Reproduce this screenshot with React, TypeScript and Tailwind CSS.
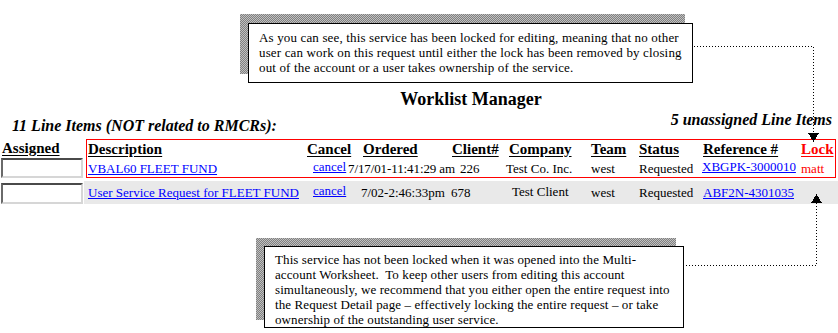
export default function App() {
  return (
    <div className="relative w-[838px] h-[333px] overflow-hidden bg-white text-black font-['Liberation_Serif','Times_New_Roman',serif]">
      <div className="pt-[89px]">
        <h1 className="pl-[104px] text-center text-[18px] leading-[21px] font-bold">Worklist Manager</h1>

        <div className="flex justify-between h-[29px] pl-[12px] pr-[6px]">
          <p className="mt-[7px] text-[16px] leading-[18px] font-bold italic">11 Line Items (NOT related to RMCRs):</p>
          <p className="mt-[1px] text-[16px] leading-[18px] font-bold italic">5 unassigned Line Items</p>
        </div>

        {/* header + first row, red box around the right part */}
        <div className="flex">
          <div className="w-[86px] shrink-0">
            <div className="h-[19px] pl-[2px] text-[15px] leading-[19px] font-bold underline underline-offset-2">Assigned</div>
            <input className="block ml-px w-[82px] h-[20px] border-2 border-t-[#4a4a4a] border-l-[#6a6a6a] border-r-[#d6d6d6] border-b-[#d6d6d6] bg-white" />
          </div>
          <div className="w-[750px] shrink-0 border border-[#ff0000]">
            <div className="flex h-[19px] text-[15px] leading-[19px] font-bold whitespace-nowrap [&>div]:underline [&>div]:underline-offset-2">
              <div className="w-[218px] pl-px">Description</div>
              <div className="w-[42px] pl-[2px]">Cancel</div>
              <div className="w-[101px] pl-[16px]">Ordered</div>
              <div className="w-[56px] pl-[4px]">Client#</div>
              <div className="w-[85px] pl-[5px]">Company</div>
              <div className="w-[48px] pl-[2px]">Team</div>
              <div className="w-[63px] pl-[2px]">Status</div>
              <div className="w-[99px] pl-[3px]">Reference #</div>
              <div className="w-[36px] pl-[2px] text-[#ff0000]">Lock</div>
            </div>
            <div className="flex h-[18px] text-[13px] leading-[19px] whitespace-nowrap">
              <div className="w-[218px] pl-px"><a href="#" className="text-[#0000ff] underline">VBAL60 FLEET FUND</a></div>
              <div className="w-[42px] pl-[8px] leading-[15px]"><a href="#" className="text-[#0000ff] underline">cancel</a></div>
              <div className="w-[101px] pl-[1px] tracking-[-0.1px]">7/17/01-11:41:29 am</div>
              <div className="w-[56px] pl-[12px]">226</div>
              <div className="w-[85px] pl-[2px]">Test Co. Inc.</div>
              <div className="w-[48px] pl-[2px]">west</div>
              <div className="w-[63px] pl-[2px]">Requested</div>
              <div className="w-[99px] pl-[2px] leading-[16px]"><a href="#" className="text-[#0000ff] underline">XBGPK-3000010</a></div>
              <div className="w-[36px] pl-[2px] text-[#ff0000]">matt</div>
            </div>
          </div>
        </div>

        {/* second row */}
        <div className="flex mt-[3px] h-[23px]">
          <div className="w-[84px] shrink-0 pt-[2px]">
            <input className="block ml-px w-[82px] h-[21px] border-2 border-t-[#4a4a4a] border-l-[#6a6a6a] border-r-[#d6d6d6] border-b-[#d6d6d6] bg-white" />
          </div>
          <div className="flex w-[754px] bg-[#e9e9e9] text-[13px] leading-[23px] whitespace-nowrap">
            <div className="w-[221px] pl-[4px]"><a href="#" className="text-[#0000ff] underline">User Service Request for FLEET FUND</a></div>
            <div className="w-[42px] pl-[8px] leading-[19px]"><a href="#" className="text-[#0000ff] underline">cancel</a></div>
            <div className="w-[101px] pl-[14px]">7/02-2:46:33pm</div>
            <div className="w-[56px] pl-[3px]">678</div>
            <div className="w-[85px] pl-[8px] leading-[21px]">Test Client</div>
            <div className="w-[48px] pl-[2px]">west</div>
            <div className="w-[63px] pl-[2px]">Requested</div>
            <div className="w-[99px] pl-[3px]"><a href="#" className="text-[#0000ff] underline">ABF2N-4301035</a></div>
          </div>
        </div>
      </div>

      {/* callout 1 */}
      <div className="absolute left-[240px] top-[14px] w-[445px] h-[60px] bg-[repeating-conic-gradient(#808080_0_25%,#c0c0c0_0_50%)] bg-[length:2px_2px]" />
      <div className="absolute left-[248px] top-[23px] w-[445px] h-[60px] border border-black bg-white pl-[10px] pt-[6px] text-[13px] leading-[15px] tracking-[0.15px] whitespace-nowrap">
        As you can see, this service has been locked for editing, meaning that no other
        <br />
        user can work on this request until either the lock has been removed by closing
        <br />
        out of the account or a user takes ownership of the service.
      </div>

      {/* callout 2 */}
      <div className="absolute left-[256px] top-[238px] w-[420px] h-[82px] bg-[repeating-conic-gradient(#808080_0_25%,#c0c0c0_0_50%)] bg-[length:2px_2px]" />
      <div className="absolute left-[264px] top-[246px] w-[420px] h-[82px] border border-black bg-white pl-[10px] pt-[5px] text-[13px] leading-[15px] tracking-[0.1px] whitespace-nowrap">
        This service has not been locked when it was opened into the Multi-
        <br />
        account Worksheet.&nbsp; To keep other users from editing this account
        <br />
        simultaneously, we recommend that you either open the entire request into
        <br />
        the Request Detail page – effectively locking the entire request – or take
        <br />
        ownership of the outstanding user service.
      </div>

      {/* connectors */}
      <svg className="absolute inset-0 pointer-events-none" width="838" height="333" shapeRendering="crispEdges">
        <g stroke="#000" strokeWidth="1" strokeDasharray="1 2" fill="none">
          <path d="M694 46.5 H813.5 V133" />
          <path d="M816.5 203 V265.5 H685" />
        </g>
        <polygon points="808,133 819,133 813.5,142" fill="#000" />
        <polygon points="811,203 822,203 816.5,194" fill="#000" />
      </svg>
    </div>
  );
}
